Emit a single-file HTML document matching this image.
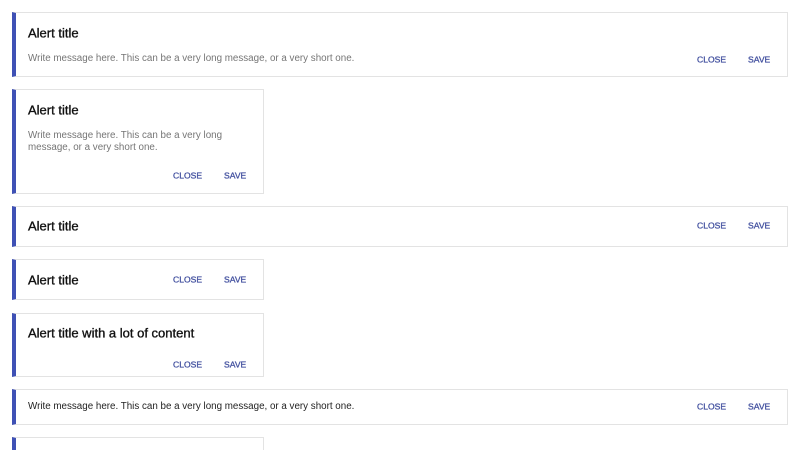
<!DOCTYPE html>
<html><head><style>
html,body{margin:0;width:800px;height:450px;overflow:hidden;background:#fff;font-family:"Liberation Sans",Arial,sans-serif;position:relative}
.c{position:absolute;left:12px;border:1px solid #e3e3e3;border-left:4px solid #3f51b5;box-sizing:border-box;background:#fff}
.w{width:776px}.n{width:252px}
.t,.m,.b{position:absolute;white-space:nowrap;line-height:1}
.t{font-size:13px;color:#111;-webkit-text-stroke:0.35px #111;transform:translateY(-50%)}
.m{font-size:9.8px;color:#757575;transform:translateY(-50%)}
.b{font-size:8.6px;color:#4452a0;-webkit-text-stroke:0.3px #4452a0;transform:translateY(-50%)}
</style></head><body>
<div class="c w" style="top:12px;height:65px"></div>
<div class="t" style="left:28px;top:33px">Alert title</div>
<div class="m" style="left:28px;top:59px">Write message here. This can be a very long message, or a very short one.</div>
<div class="b" style="left:697px;top:60px">CLOSE</div><div class="b" style="left:748px;top:60px">SAVE</div>

<div class="c n" style="top:89px;height:105px"></div>
<div class="t" style="left:28px;top:110px">Alert title</div>
<div class="m" style="left:28px;top:136px">Write message here. This can be a very long</div>
<div class="m" style="left:28px;top:148px">message, or a very short one.</div>
<div class="b" style="left:173px;top:176px">CLOSE</div><div class="b" style="left:224px;top:176px">SAVE</div>

<div class="c w" style="top:206px;height:41px"></div>
<div class="t" style="left:28px;top:226px">Alert title</div>
<div class="b" style="left:697px;top:226px">CLOSE</div><div class="b" style="left:748px;top:226px">SAVE</div>

<div class="c n" style="top:259px;height:41px"></div>
<div class="t" style="left:28px;top:280px">Alert title</div>
<div class="b" style="left:173px;top:280px">CLOSE</div><div class="b" style="left:224px;top:280px">SAVE</div>

<div class="c n" style="top:313px;height:64px"></div>
<div class="t" style="left:28px;top:333px">Alert title with a lot of content</div>
<div class="b" style="left:173px;top:365px">CLOSE</div><div class="b" style="left:224px;top:365px">SAVE</div>

<div class="c w" style="top:389px;height:36px"></div>
<div class="m" style="left:28px;top:407px;color:#222">Write message here. This can be a very long message, or a very short one.</div>
<div class="b" style="left:697px;top:407px">CLOSE</div><div class="b" style="left:748px;top:407px">SAVE</div>

<div class="c n" style="top:437px;height:13px;border-bottom:none"></div>
</body></html>
